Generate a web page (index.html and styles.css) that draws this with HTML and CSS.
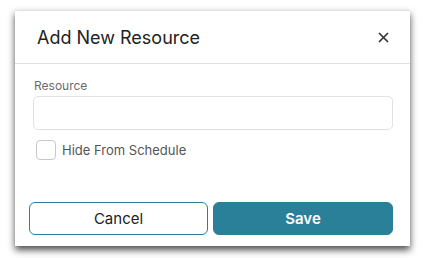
FILE: index.html
```html
<!DOCTYPE html>
<html>
<head>
<meta charset="utf-8">
<link rel="stylesheet" href="styles.css">
</head>
<body>
<div class="dialog">
  <div class="dialog-header">
    <h1 class="dialog-title">Add New Resource</h1>
    <button class="close-btn" aria-label="Close">
      <svg width="11" height="11" viewBox="0 0 11 11"><path d="M1.5 1.5 L9.5 9.5 M9.5 1.5 L1.5 9.5" stroke="#333" stroke-width="1.7" stroke-linecap="round"/></svg>
    </button>
  </div>
  <div class="dialog-body">
    <label class="field-label">Resource</label>
    <div class="text-input"></div>
    <div class="check-row">
      <span class="checkbox"></span>
      <span class="check-label">Hide From Schedule</span>
    </div>
  </div>
  <div class="dialog-footer">
    <button class="btn btn-cancel">Cancel</button>
    <button class="btn btn-save">Save</button>
  </div>
</div>
</body>
</html>
```
FILE: styles.css
```css
* { box-sizing: border-box; }
html, body { margin: 0; padding: 0; background: #fff; }
body { font-family: Inter, "Noto Sans", sans-serif; width: 428px; height: 258px; overflow: hidden; padding: 10px 0 0 15px; }
.dialog {
  width: 395px;
  height: 236px;
  background: #fff;
  border-top: 1px solid #e2e2e2;
  box-shadow: 0 4px 7px rgba(0,0,0,0.7);
  display: flex;
  flex-direction: column;
}
.dialog-header {
  height: 53px;
  border-bottom: 1px solid #e0e0e0;
  display: flex;
  align-items: center;
  justify-content: space-between;
  padding: 0 21px 0 22px;
}
.dialog-title { margin: 0; font-size: 18px; font-weight: 400; color: #222; }
.close-btn { border: 0; background: none; padding: 0; width: 12px; height: 12px; display: flex; align-items: center; justify-content: center; }
.dialog-body { padding: 14px 17px 0 18px; }
.field-label { display: block; font-size: 12px; line-height: 15px; color: #6b6b6b; margin-left: 1px; }
.text-input { margin-top: 3px; height: 34px; border: 1px solid #e2e2e6; border-radius: 5px; }
.check-row { display: flex; align-items: center; margin-top: 10px; padding-left: 3px; gap: 6px; }
.checkbox { width: 20px; height: 20px; border: 1px solid #c8c8cc; border-radius: 4px; }
.check-label { font-size: 13px; color: #555; }
.dialog-footer { margin-top: auto; display: flex; gap: 5px; padding: 0 17px 11px 14px; }
.btn { height: 33px; border-radius: 6px; font-family: inherit; font-size: 15px; }
.btn-cancel { width: 179px; background: #fff; border: 1px solid #2a8099; color: #222; }
.btn-save { flex: 1; background: #2a8099; border: 1px solid #2a8099; color: #fff; font-weight: 600; }
```
